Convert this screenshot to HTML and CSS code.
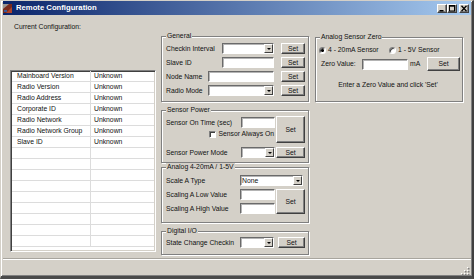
FILE: index.html
```html
<!DOCTYPE html>
<html>
<head>
<meta charset="utf-8">
<title>Remote Configuration</title>
<link rel="stylesheet" href="styles.css">
</head>
<body>
<div class="window">
  <div class="titlebar">
    <svg class="appicon" width="9" height="9" viewBox="0 0 9 9">
      <rect x="0" y="0" width="9" height="9" fill="#7a2a1c"/>
      <polygon points="0,0 6,0 0,5" fill="#9a9490"/>
      <polygon points="3,9 9,3 9,9" fill="#b0442a"/>
      <rect x="1" y="6" width="3" height="2" fill="#3a5a9a"/>
    </svg>
    <span class="title">Remote Configuration</span>
    <div class="caption-buttons">
      <span class="cbtn"><svg width="8" height="7" viewBox="0 0 8 7"><rect x="1.5" y="5" width="4" height="1.5" fill="#000"/></svg></span>
      <span class="cbtn"><svg width="8" height="7" viewBox="0 0 8 7"><rect x="1.5" y="0.5" width="5" height="5.5" fill="none" stroke="#000" stroke-width="1"/><rect x="1.5" y="0.5" width="5" height="1.2" fill="#000"/></svg></span>
      <span class="cbtn close"><svg width="8" height="7" viewBox="0 0 8 7"><path d="M1.5 0.8 L6.5 6.2 M6.5 0.8 L1.5 6.2" stroke="#000" stroke-width="1.3"/></svg></span>
    </div>
  </div>

  <div class="client">
    <div class="col-left">
      <div class="caption">Current Configuration:</div>
      <div class="listview">
        <div class="lv-row"><span class="c1">Mainboard Version</span><span class="c2">Unknown</span></div>
        <div class="lv-row"><span class="c1">Radio Version</span><span class="c2">Unknown</span></div>
        <div class="lv-row"><span class="c1">Radio Address</span><span class="c2">Unknown</span></div>
        <div class="lv-row"><span class="c1">Corporate ID</span><span class="c2">Unknown</span></div>
        <div class="lv-row"><span class="c1">Radio Network</span><span class="c2">Unknown</span></div>
        <div class="lv-row"><span class="c1">Radio Network Group</span><span class="c2">Unknown</span></div>
        <div class="lv-row"><span class="c1">Slave ID</span><span class="c2">Unknown</span></div>
        <div class="lv-row"><span class="c1"></span><span class="c2"></span></div>
        <div class="lv-row"><span class="c1"></span><span class="c2"></span></div>
        <div class="lv-row"><span class="c1"></span><span class="c2"></span></div>
        <div class="lv-row"><span class="c1"></span><span class="c2"></span></div>
        <div class="lv-row"><span class="c1"></span><span class="c2"></span></div>
        <div class="lv-row"><span class="c1"></span><span class="c2"></span></div>
        <div class="lv-row"><span class="c1"></span><span class="c2"></span></div>
        <div class="lv-row"><span class="c1"></span><span class="c2"></span></div>
        <div class="lv-row"><span class="c1"></span><span class="c2"></span></div>
      </div>
    </div>

    <div class="col-mid">
      <div class="group g-general">
        <span class="legend">General</span>
        <div class="frow"><span class="lbl">Checkin Interval</span><span class="combo w52"><span class="dd"><i class="tri"></i></span></span><span class="btn set-g">Set</span></div>
        <div class="frow"><span class="lbl">Slave ID</span><span class="tb w52"></span><span class="btn set-g">Set</span></div>
        <div class="frow"><span class="lbl">Node Name</span><span class="tb w66"></span><span class="btn set-g">Set</span></div>
        <div class="frow"><span class="lbl">Radio Mode</span><span class="combo w66"><span class="dd"><i class="tri"></i></span></span><span class="btn set-g">Set</span></div>
      </div>

      <div class="group g-sensor">
        <span class="legend">Sensor Power</span>
        <span class="lbl r1">Sensor On Time (sec)</span>
        <span class="tb r1 c2"></span>
        <span class="btn tall-sensor">Set</span>
        <span class="checkrow"><span class="checkbox"></span><span>Sensor Always On</span></span>
        <span class="lbl r3">Sensor Power Mode</span>
        <span class="combo r3 c2"><span class="dd"><i class="tri"></i></span></span>
        <span class="btn r3 c3">Set</span>
      </div>

      <div class="group g-analog">
        <span class="legend">Analog 4-20mA / 1-5V</span>
        <span class="lbl ar1">Scale A Type</span>
        <span class="combo wide-combo"><span class="ctext">None</span><span class="dd"><i class="tri"></i></span></span>
        <span class="lbl ar2">Scaling A Low Value</span>
        <span class="tb ar2 c2"></span>
        <span class="lbl ar3">Scaling A High Value</span>
        <span class="tb ar3 c2"></span>
        <span class="btn tall-analog">Set</span>
      </div>

      <div class="group g-digital">
        <span class="legend">Digital I/O</span>
        <span class="lbl">State Change Checkin</span>
        <span class="combo"><span class="dd"><i class="tri"></i></span></span>
        <span class="btn">Set</span>
      </div>
    </div>

    <div class="col-right">
      <div class="group g-zero">
        <span class="legend">Analog Sensor Zero</span>
        <div class="radiorow">
          <span class="radioitem first"><span class="radio checked"></span><span>4 - 20mA Sensor</span></span>
          <span class="radioitem"><span class="radio"></span><span>1 - 5V Sensor</span></span>
        </div>
        <div class="zerorow">
          <span class="zlbl">Zero Value:</span>
          <span class="tb w46"></span>
          <span class="unit">mA</span>
          <span class="btn set-z">Set</span>
        </div>
        <div class="hint">Enter a Zero Value and click 'Set'</div>
      </div>
    </div>
  </div>

  <div class="statusbar">
    <svg class="grip" width="10" height="10" viewBox="0 0 10 10">
      <g fill="#fff">
        <rect x="7" y="1" width="1" height="1"/>
        <rect x="7" y="4" width="1" height="1"/><rect x="4" y="4" width="1" height="1"/>
        <rect x="7" y="7" width="1" height="1"/><rect x="4" y="7" width="1" height="1"/><rect x="1" y="7" width="1" height="1"/>
      </g>
      <g fill="#808080">
        <rect x="8" y="2" width="1.5" height="1.5"/>
        <rect x="8" y="5" width="1.5" height="1.5"/><rect x="5" y="5" width="1.5" height="1.5"/>
        <rect x="8" y="8" width="1.5" height="1.5"/><rect x="5" y="8" width="1.5" height="1.5"/><rect x="2" y="8" width="1.5" height="1.5"/>
      </g>
    </svg>
  </div>
</div>
</body>
</html>
```

FILE: styles.css
```css
* { box-sizing: border-box; }
html, body { margin: 0; padding: 0; }
body {
  width: 474px;
  height: 279px;
  overflow: hidden;
  background: #d4d0c8;
  font-family: "Liberation Sans", Arial, sans-serif;
  font-size: 6.8px;
  line-height: 8px;
  color: #111;
}

.window {
  width: 474px;
  height: 279px;
  background: #d4d0c8;
  border-top: 1px solid #d4d0c8;
  border-left: 1px solid #d4d0c8;
  border-right: 2px solid #404040;
  border-bottom: 3px solid #4a4a4a;
  box-shadow: inset 1px 1px #fff, inset -1px -1px #808080;
  padding: 0 1px 0 2px;
  display: flex;
  flex-direction: column;
}

/* title bar */
.titlebar {
  height: 14px;
  flex: none;
  display: flex;
  align-items: center;
  background: linear-gradient(to right, #0a246a, #a6caf0);
}
.appicon { display: block; flex: none; }
.title {
  margin-left: 4px;
  color: #fff;
  font-weight: bold;
  font-size: 7.7px;
  white-space: nowrap;
}
.caption-buttons {
  margin-left: auto;
  margin-right: 2px;
  display: flex;
}
.cbtn {
  width: 10px;
  height: 9px;
  background: #d4d0c8;
  border: 1px solid;
  border-color: #fff #404040 #404040 #fff;
  box-shadow: inset -1px -1px #808080;
  display: flex;
  align-items: flex-start;
  justify-content: flex-start;
}
.cbtn svg { display: block; }
.cbtn.close { margin-left: 2px; }

/* client area */
.client {
  height: 243px;
  flex: none;
  display: flex;
  padding-left: 7px;
}
.col-left {
  width: 146px;
  padding-top: 8px;
}
.caption {
  padding-left: 4px;
  height: 8px;
  white-space: nowrap;
}
.listview {
  margin-top: 39px;
  width: 146px;
  height: 182px;
  background: #fff;
  border: 1px solid;
  border-color: #808080 #fff #fff #808080;
  box-shadow: inset 1px 1px #404040, inset -1px -1px #d4d0c8;
  padding: 0 1px 1px 1px;
  overflow: hidden;
}
.lv-row {
  display: grid;
  grid-template-columns: 79px 1fr;
  height: 11px;
  border-bottom: 1px solid #dcdcdc;
  line-height: 10px;
  white-space: nowrap;
}
.lv-row .c1 { padding-left: 5px; border-right: 1px solid #dcdcdc; }
.lv-row .c2 { padding-left: 3px; }

.col-mid {
  margin-left: 5px;
  width: 148px;
  padding-top: 21px;
}
.col-right {
  margin-left: 6px;
  width: 148px;
  padding-top: 22px;
}

/* group boxes */
.group {
  position: relative;
  border: 1px solid #808080;
  box-shadow: inset 1px 1px #fff, 1px 1px #fff;
}
.legend {
  position: absolute;
  top: -5px;
  left: 4px;
  padding: 0 1px;
  background: #d4d0c8;
  line-height: 8px;
  white-space: nowrap;
}
.lbl { white-space: nowrap; align-self: center; }

/* controls */
.tb, .combo {
  display: flex;
  height: 11px;
  background: #fff;
  border: 1px solid;
  border-color: #6a6a6a #fff #fff #6a6a6a;
  box-shadow: inset 1px 1px #b4b4b4;
}
.combo { justify-content: space-between; align-items: stretch; }
.dd {
  margin-left: auto;
  width: 9px;
  background: #d4d0c8;
  border: 1px solid;
  border-color: #fff #404040 #404040 #fff;
  display: flex;
  align-items: center;
  justify-content: center;
}
.tri {
  width: 0;
  height: 0;
  border-left: 2px solid transparent;
  border-right: 2px solid transparent;
  border-top: 2.5px solid #000;
}
.ctext { padding-left: 1px; line-height: 9px; }

.btn {
  display: flex;
  align-items: center;
  justify-content: center;
  height: 11px;
  background: #d4d0c8;
  border: 1px solid;
  border-color: #fff #404040 #404040 #fff;
  box-shadow: inset -1px -1px #808080;
}

/* General */
.g-general {
  height: 66px;
  padding: 6px 3px 0 4px;
  margin-bottom: 8px;
}
.frow {
  display: flex;
  align-items: center;
  height: 11px;
  margin-bottom: 3px;
}
.frow .lbl { flex: 1; }
.w52 { width: 52px; }
.w66 { width: 66px; }
.w46 { width: 46px; }
.set-g { width: 24px; margin-left: 7px; }

/* Sensor Power */
.g-sensor {
  height: 53px;
  padding: 6px 3px 0 4px;
  margin-bottom: 4px;
  display: grid;
  grid-template-columns: 1fr 34px 29px;
  grid-template-rows: 11px 19px 11px;
  column-gap: 1px;
}
.g-sensor .r1 { grid-row: 1; }
.g-sensor .r3 { grid-row: 3; }
.c2 { grid-column: 2; }
.c3 { grid-column: 3; }
.g-sensor .lbl.r1, .g-sensor .lbl.r3 { grid-column: 1; }
.tall-sensor {
  grid-column: 3;
  grid-row: 1 / 3;
  align-self: start;
  height: 27px;
  margin-top: -1px;
}
.checkrow {
  grid-column: 1 / 3;
  grid-row: 2;
  justify-self: end;
  align-self: start;
  margin-top: 2px;
  margin-right: 1px;
  display: flex;
  align-items: center;
  gap: 2px;
  white-space: nowrap;
}
.checkbox {
  width: 7px;
  height: 7px;
  background: #fff;
  border: 1px solid;
  border-color: #808080 #fff #fff #808080;
  box-shadow: inset 1px 1px #404040;
}

/* Analog */
.g-analog {
  height: 56px;
  padding: 7px 3px 0 4px;
  margin-bottom: 8px;
  display: grid;
  grid-template-columns: 1fr 35px 29px;
  grid-template-rows: 11px 11px 11px;
  column-gap: 1px;
  row-gap: 3px;
}
.g-analog .ar1 { grid-row: 1; grid-column: 1; }
.g-analog .ar2 { grid-row: 2; }
.g-analog .ar3 { grid-row: 3; }
.g-analog .lbl.ar2, .g-analog .lbl.ar3 { grid-column: 1; }
.wide-combo {
  grid-row: 1;
  grid-column: 2 / 4;
  width: 63px;
}
.tall-analog {
  grid-column: 3;
  grid-row: 2 / 4;
  height: 25px;
}

/* Digital */
.g-digital {
  height: 24px;
  padding: 5px 3px 0 4px;
  display: grid;
  grid-template-columns: 1fr 34px 27px;
  grid-template-rows: 11px;
  column-gap: 4px;
}

/* Analog Sensor Zero */
.g-zero {
  height: 65px;
  padding: 0 2px 0 0;
}
.radiorow {
  margin-top: 8px;
  padding-left: 3px;
  height: 8px;
  display: flex;
  align-items: center;
}
.radioitem {
  display: flex;
  align-items: center;
  gap: 2px;
  white-space: nowrap;
}
.radioitem.first { width: 70px; }
.radio {
  width: 7px;
  height: 7px;
  border-radius: 50%;
  background: #fff;
  border: 1px solid;
  border-color: #808080 #fff #fff #808080;
  box-shadow: inset 1px 1px #404040;
}
.radio.checked { background: radial-gradient(circle, #000 0 1.3px, #fff 1.6px); }
.zerorow {
  margin-top: 3px;
  height: 14px;
  padding-left: 5px;
  display: flex;
  align-items: center;
}
.zlbl { width: 41px; white-space: nowrap; }
.unit { margin-left: 2px; }
.set-z { margin-left: auto; width: 33px; height: 14px; }
.hint {
  margin-top: 10px;
  text-align: center;
  white-space: nowrap;
}

/* status bar */
.statusbar {
  flex: 1;
  border-top: 1px solid #a8a59e;
  box-shadow: inset 0 1px #fff;
  display: flex;
  justify-content: flex-end;
  align-items: flex-end;
}
.grip { display: block; margin-right: 1px; }
```
